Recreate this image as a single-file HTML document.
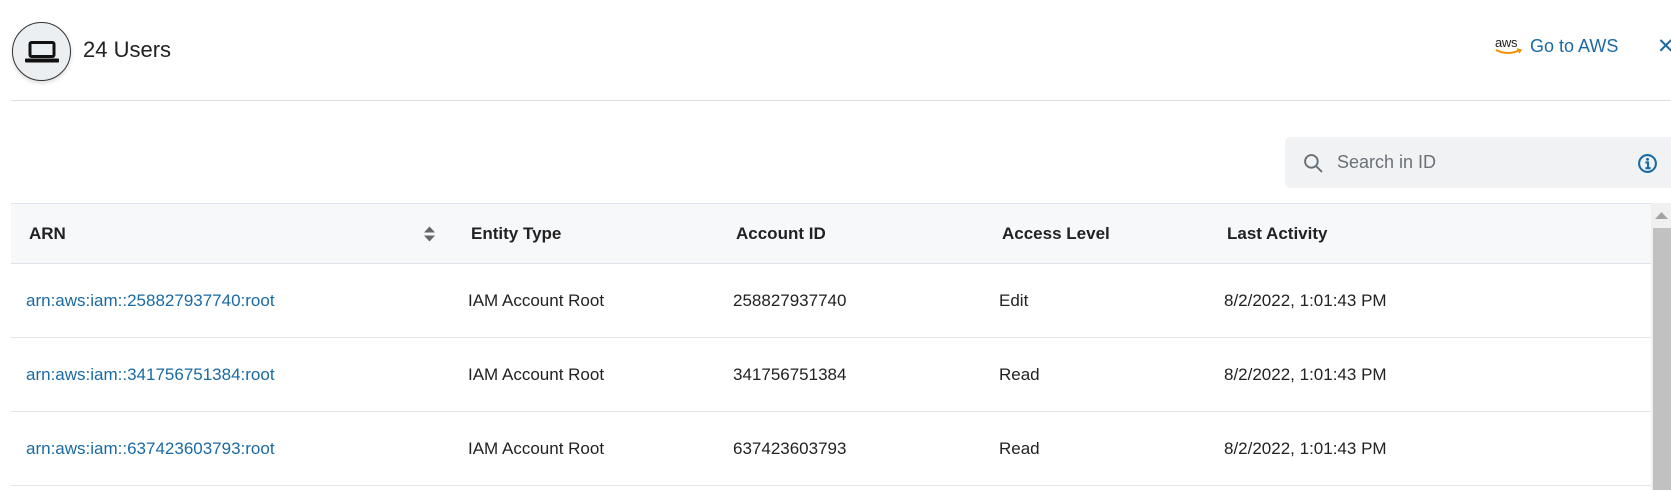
<!DOCTYPE html>
<html><head><style>
*{margin:0;padding:0;box-sizing:border-box}
body{width:1671px;height:490px;overflow:hidden;background:#fff;font-family:"Segoe UI","Liberation Sans",sans-serif;color:#222;position:relative}
.abs{position:absolute}
.circ{left:12px;top:22px;width:59px;height:59px;border-radius:50%;background:#eceff2;border:1px solid #333;box-shadow:0 2px 4px rgba(0,0,0,.15)}
.title{left:83px;top:37px;font-size:22px;color:#222}
.hr{left:11px;top:100px;width:1660px;height:1px;background:#dcdfe3}
.aws{left:1530px;top:36px;font-size:18px;color:#1a6aa3}
.x{left:1657px;top:34px;font-size:21px;color:#1a6aa3}
.search{left:1285px;top:137px;width:390px;height:51px;background:#f0f2f4;border-radius:5px}
.search span{position:absolute;left:52px;top:15px;font-size:18px;color:#6b7177}
.tbl{left:11px;top:203px;width:1640px}
.hd{height:61px;background:#f6f8fa;border-top:1px solid #dde3ea;border-bottom:1px solid #dde3ea;position:relative;font-weight:bold;font-size:17px}
.row{height:74px;border-bottom:1px solid #e3e7eb;position:relative;font-size:17px}
.c{position:absolute;top:50%;transform:translateY(-50%);white-space:nowrap}
.lk{color:#1a6aa3}
.sb{left:1651px;top:203px;width:20px;height:287px;background:#f0f0f0}
.thumb{left:1653px;top:228px;width:18px;height:262px;background:#c1c1c1}
</style></head><body>
<div class="abs circ"><svg style="position:absolute;left:12px;top:18px" width="34" height="22" viewBox="0 0 34 22"><rect x="5" y="1.5" width="24" height="14" rx="1.5" fill="none" stroke="#111" stroke-width="3"/><rect x="0" y="17.5" width="34" height="4" rx="1" fill="#111"/></svg></div>
<div class="abs title">24 Users</div>
<div class="abs hr"></div>
<div class="abs" style="left:1495px;top:36px"><div style="font-size:13px;color:#222;line-height:13px;letter-spacing:-0.3px">aws</div><svg width="28" height="8" style="position:absolute;left:0;top:12px"><path d="M1 2 Q13 8 25 2" stroke="#f29100" stroke-width="2" fill="none"/><path d="M22 1 L26 2 L24 5" stroke="#f29100" stroke-width="1.5" fill="none"/></svg></div>
<div class="abs aws">Go to AWS</div>
<div class="abs x">✕</div>
<div class="abs search"><svg style="position:absolute;left:18px;top:16px" width="21" height="21" viewBox="0 0 20 20"><circle cx="8" cy="8" r="6" fill="none" stroke="#666e75" stroke-width="1.8"/><path d="M12.5 12.5L18 18" stroke="#666e75" stroke-width="1.8"/></svg><span>Search in ID</span>
<svg style="position:absolute;left:352px;top:16px" width="21" height="21" viewBox="0 0 20 20"><circle cx="10" cy="10" r="8" fill="none" stroke="#1a6aa3" stroke-width="2"/><circle cx="10" cy="6" r="1.4" fill="#1a6aa3"/><path d="M8 9h2.5v5M8 14.5h5" stroke="#1a6aa3" stroke-width="2" fill="none"/></svg></div>
<div class="abs tbl">
<div class="hd"><span class="c" style="left:18px">ARN</span><svg class="c" style="left:412px" width="13" height="17"><path d="M1 7L6.5 1L12 7Z M1 10L6.5 16L12 10Z" fill="#666"/></svg><span class="c" style="left:460px">Entity Type</span><span class="c" style="left:725px">Account ID</span><span class="c" style="left:991px">Access Level</span><span class="c" style="left:1216px">Last Activity</span></div>
<div class="row"><span class="c lk" style="left:15px">arn:aws:iam::258827937740:root</span><span class="c" style="left:457px">IAM Account Root</span><span class="c" style="left:722px">258827937740</span><span class="c" style="left:988px">Edit</span><span class="c" style="left:1213px">8/2/2022, 1:01:43 PM</span></div>
<div class="row"><span class="c lk" style="left:15px">arn:aws:iam::341756751384:root</span><span class="c" style="left:457px">IAM Account Root</span><span class="c" style="left:722px">341756751384</span><span class="c" style="left:988px">Read</span><span class="c" style="left:1213px">8/2/2022, 1:01:43 PM</span></div>
<div class="row"><span class="c lk" style="left:15px">arn:aws:iam::637423603793:root</span><span class="c" style="left:457px">IAM Account Root</span><span class="c" style="left:722px">637423603793</span><span class="c" style="left:988px">Read</span><span class="c" style="left:1213px">8/2/2022, 1:01:43 PM</span></div>
</div>
<div class="abs sb"></div>
<svg class="abs" style="left:1655px;top:212px" width="13" height="7"><path d="M0 7L6.5 0L13 7Z" fill="#a3a3a3"/></svg>
<div class="abs thumb"></div>
</body></html>
